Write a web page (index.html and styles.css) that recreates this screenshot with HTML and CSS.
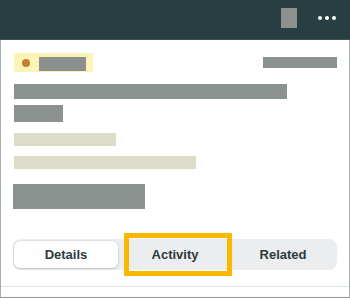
FILE: index.html
```html
<!DOCTYPE html>
<html>
<head>
<meta charset="utf-8">
<link rel="stylesheet" href="styles.css">
</head>
<body>
<div class="frame">
  <header class="header">
    <div class="avatar"></div>
    <div class="more"><span></span><span></span><span></span></div>
  </header>
  <main class="card">
    <div class="top-row">
      <div class="badge"><span class="dot"></span><span class="badge-bar"></span></div>
      <div class="meta-bar"></div>
    </div>
    <div class="bar title-bar"></div>
    <div class="bar title-bar2"></div>
    <div class="bar light light1"></div>
    <div class="bar light light2"></div>
    <div class="bar block"></div>
    <nav class="tabs">
      <div class="tab active">Details</div>
      <div class="tab highlighted">Activity</div>
      <div class="tab">Related</div>
    </nav>
  </main>
  <div class="footer"></div>
</div>
</body>
</html>
```
FILE: styles.css
```css
* { box-sizing: border-box; }
html, body { margin: 0; padding: 0; background: #ffffff; }
body { font-family: "Liberation Sans", Arial, sans-serif; }

.frame {
  width: 350px;
  height: 298px;
  display: flex;
  flex-direction: column;
  border-left: 1px solid #a4adb2;
  border-right: 1px solid #a4adb2;
  border-bottom: 1px solid #8d969b;
}

.header {
  height: 40px;
  background: #283e42;
  border-bottom: 1px solid #3e5256;
  margin: 0 -1px;
  display: flex;
  align-items: flex-start;
  justify-content: flex-end;
  padding-right: 14px;
}
.avatar {
  width: 16px;
  height: 20px;
  margin-top: 8px;
  background: #8a918f;
}
.more {
  display: flex;
  gap: 3px;
  margin-left: 21px;
  margin-top: 16px;
}
.more span {
  width: 4px;
  height: 4px;
  border-radius: 50%;
  background: #ffffff;
}

.card {
  flex: 1;
  padding: 13px 12px 0 13px;
  border-bottom: 1px solid #e1e4e6;
}

.top-row {
  display: flex;
  justify-content: space-between;
  align-items: flex-start;
}
.badge {
  width: 79px;
  height: 19px;
  background: #fcf4b6;
  border-radius: 2px;
  display: flex;
  align-items: center;
  padding: 3px 0 0 8px;
  align-items: flex-start;
}
.dot {
  width: 8px;
  height: 8px;
  border-radius: 50%;
  background: #c67e33;
  margin-top: 3px;
}
.badge-bar {
  width: 47px;
  height: 14px;
  margin-left: 9px;
  margin-top: 1px;
  background: #8a918e;
}
.meta-bar {
  width: 74px;
  height: 11px;
  margin-top: 4px;
  background: #8a918e;
}

.bar { background: #8a918e; }
.title-bar { width: 273px; height: 15px; margin-top: 12px; }
.title-bar2 { width: 49px; height: 17px; margin-top: 6px; }
.light { background: #dddcc8; height: 13px; }
.light1 { width: 102px; margin-top: 11px; }
.light2 { width: 182px; margin-top: 10px; }
.block { width: 132px; height: 25px; margin-top: 15px; margin-left: -1px; }

.tabs {
  margin-top: 30px;
  margin-left: -1px;
  height: 31px;
  background: #ecedee;
  border-radius: 8px;
  padding: 2px 0 2px 1px;
  display: flex;
}
.tab {
  flex: 0 0 108px;
  display: flex;
  align-items: center;
  justify-content: center;
  font-size: 13px;
  font-weight: bold;
  color: #2c3a3d;
  position: relative;
}
.tab.active {
  flex: 0 0 104px;
  margin-right: 3px;
  background: #ffffff;
  border-radius: 6px;
  box-shadow: 0 0 0 1px rgba(0, 0, 0, 0.05), 0 1px 2px rgba(0, 0, 0, 0.15);
}
.tab.highlighted::after {
  content: "";
  position: absolute;
  left: 3px;
  right: -3px;
  top: -8px;
  bottom: -8px;
  border: 5px solid #fbb700;
}

.footer {
  height: 10px;
}
```
